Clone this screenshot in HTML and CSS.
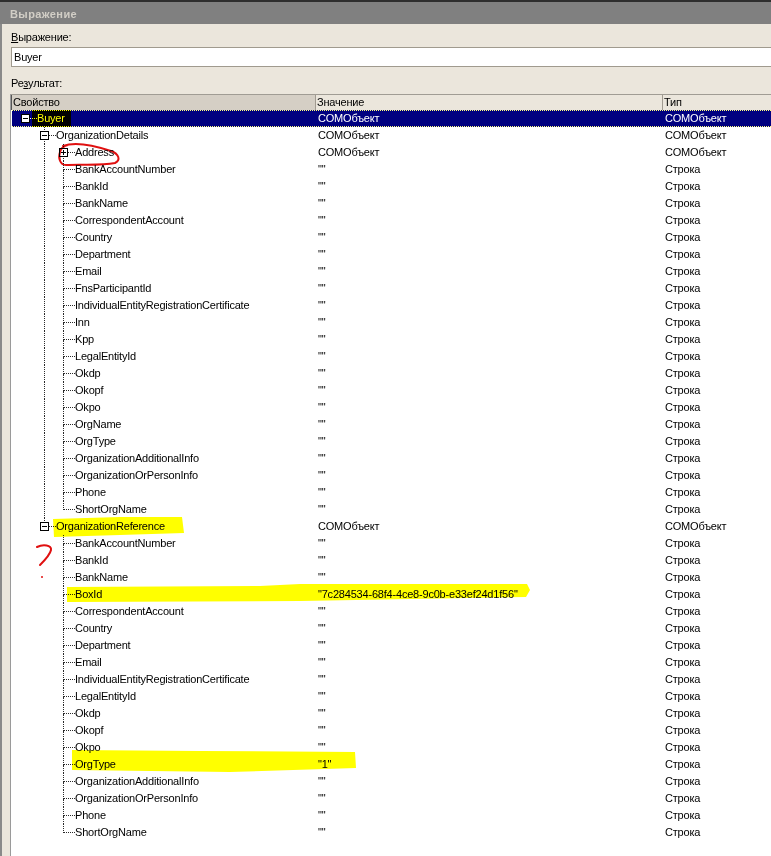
FILE: index.html
```html
<!DOCTYPE html>
<html lang="ru">
<head>
<meta charset="utf-8">
<title>Выражение</title>
<link rel="stylesheet" href="styles.css">
</head>
<body>
<div class="window">
  <div class="titlebar">Выражение</div>
  <div class="content">
    <div class="label"><u>В</u>ыражение:</div>
    <div class="input">Buyer</div>
    <div class="label label2">Ре<u>з</u>ультат:</div>
    <div class="grid">
      <div class="head">
        <div class="h1">Свойство</div>
        <div class="h2">Значение</div>
        <div class="h3">Тип</div>
      </div>
      <div class="body">
        <div class="row sel"><div class="c1"><span class="node root"><i class="up"></i><i class="hz"></i><i class="dn"></i><b class="box"></b></span><span class="lbl">Buyer</span></div><div class="c2">COMОбъект</div><div class="c3">COMОбъект</div></div>

        <div class="row"><div class="c1"><span class="g"></span><span class="node"><i class="up"></i><i class="hz"></i><i class="dn"></i><b class="box"></b></span><span class="lbl">OrganizationDetails</span></div><div class="c2">COMОбъект</div><div class="c3">COMОбъект</div></div>
        <div class="row"><div class="c1"><span class="g"></span><span class="g v"></span><span class="node"><i class="up"></i><i class="hz"></i><i class="dn"></i><b class="box plus"></b></span><span class="lbl">Address</span></div><div class="c2">COMОбъект</div><div class="c3">COMОбъект</div></div>
        <div class="row"><div class="c1"><span class="g"></span><span class="g v"></span><span class="node"><i class="up"></i><i class="hz"></i><i class="dn"></i></span><span class="lbl">BankAccountNumber</span></div><div class="c2">""</div><div class="c3">Строка</div></div>
        <div class="row"><div class="c1"><span class="g"></span><span class="g v"></span><span class="node"><i class="up"></i><i class="hz"></i><i class="dn"></i></span><span class="lbl">BankId</span></div><div class="c2">""</div><div class="c3">Строка</div></div>
        <div class="row"><div class="c1"><span class="g"></span><span class="g v"></span><span class="node"><i class="up"></i><i class="hz"></i><i class="dn"></i></span><span class="lbl">BankName</span></div><div class="c2">""</div><div class="c3">Строка</div></div>
        <div class="row"><div class="c1"><span class="g"></span><span class="g v"></span><span class="node"><i class="up"></i><i class="hz"></i><i class="dn"></i></span><span class="lbl">CorrespondentAccount</span></div><div class="c2">""</div><div class="c3">Строка</div></div>
        <div class="row"><div class="c1"><span class="g"></span><span class="g v"></span><span class="node"><i class="up"></i><i class="hz"></i><i class="dn"></i></span><span class="lbl">Country</span></div><div class="c2">""</div><div class="c3">Строка</div></div>
        <div class="row"><div class="c1"><span class="g"></span><span class="g v"></span><span class="node"><i class="up"></i><i class="hz"></i><i class="dn"></i></span><span class="lbl">Department</span></div><div class="c2">""</div><div class="c3">Строка</div></div>
        <div class="row"><div class="c1"><span class="g"></span><span class="g v"></span><span class="node"><i class="up"></i><i class="hz"></i><i class="dn"></i></span><span class="lbl">Email</span></div><div class="c2">""</div><div class="c3">Строка</div></div>
        <div class="row"><div class="c1"><span class="g"></span><span class="g v"></span><span class="node"><i class="up"></i><i class="hz"></i><i class="dn"></i></span><span class="lbl">FnsParticipantId</span></div><div class="c2">""</div><div class="c3">Строка</div></div>
        <div class="row"><div class="c1"><span class="g"></span><span class="g v"></span><span class="node"><i class="up"></i><i class="hz"></i><i class="dn"></i></span><span class="lbl">IndividualEntityRegistrationCertificate</span></div><div class="c2">""</div><div class="c3">Строка</div></div>
        <div class="row"><div class="c1"><span class="g"></span><span class="g v"></span><span class="node"><i class="up"></i><i class="hz"></i><i class="dn"></i></span><span class="lbl">Inn</span></div><div class="c2">""</div><div class="c3">Строка</div></div>
        <div class="row"><div class="c1"><span class="g"></span><span class="g v"></span><span class="node"><i class="up"></i><i class="hz"></i><i class="dn"></i></span><span class="lbl">Kpp</span></div><div class="c2">""</div><div class="c3">Строка</div></div>
        <div class="row"><div class="c1"><span class="g"></span><span class="g v"></span><span class="node"><i class="up"></i><i class="hz"></i><i class="dn"></i></span><span class="lbl">LegalEntityId</span></div><div class="c2">""</div><div class="c3">Строка</div></div>
        <div class="row"><div class="c1"><span class="g"></span><span class="g v"></span><span class="node"><i class="up"></i><i class="hz"></i><i class="dn"></i></span><span class="lbl">Okdp</span></div><div class="c2">""</div><div class="c3">Строка</div></div>
        <div class="row"><div class="c1"><span class="g"></span><span class="g v"></span><span class="node"><i class="up"></i><i class="hz"></i><i class="dn"></i></span><span class="lbl">Okopf</span></div><div class="c2">""</div><div class="c3">Строка</div></div>
        <div class="row"><div class="c1"><span class="g"></span><span class="g v"></span><span class="node"><i class="up"></i><i class="hz"></i><i class="dn"></i></span><span class="lbl">Okpo</span></div><div class="c2">""</div><div class="c3">Строка</div></div>
        <div class="row"><div class="c1"><span class="g"></span><span class="g v"></span><span class="node"><i class="up"></i><i class="hz"></i><i class="dn"></i></span><span class="lbl">OrgName</span></div><div class="c2">""</div><div class="c3">Строка</div></div>
        <div class="row"><div class="c1"><span class="g"></span><span class="g v"></span><span class="node"><i class="up"></i><i class="hz"></i><i class="dn"></i></span><span class="lbl">OrgType</span></div><div class="c2">""</div><div class="c3">Строка</div></div>
        <div class="row"><div class="c1"><span class="g"></span><span class="g v"></span><span class="node"><i class="up"></i><i class="hz"></i><i class="dn"></i></span><span class="lbl">OrganizationAdditionalInfo</span></div><div class="c2">""</div><div class="c3">Строка</div></div>
        <div class="row"><div class="c1"><span class="g"></span><span class="g v"></span><span class="node"><i class="up"></i><i class="hz"></i><i class="dn"></i></span><span class="lbl">OrganizationOrPersonInfo</span></div><div class="c2">""</div><div class="c3">Строка</div></div>
        <div class="row"><div class="c1"><span class="g"></span><span class="g v"></span><span class="node"><i class="up"></i><i class="hz"></i><i class="dn"></i></span><span class="lbl">Phone</span></div><div class="c2">""</div><div class="c3">Строка</div></div>
        <div class="row"><div class="c1"><span class="g"></span><span class="g v"></span><span class="node last"><i class="up"></i><i class="hz"></i><i class="dn"></i></span><span class="lbl">ShortOrgName</span></div><div class="c2">""</div><div class="c3">Строка</div></div>

        <div class="row"><div class="c1"><span class="g"></span><span class="node last"><i class="up"></i><i class="hz"></i><i class="dn"></i><b class="box"></b></span><span class="lbl">OrganizationReference</span></div><div class="c2">COMОбъект</div><div class="c3">COMОбъект</div></div>
        <div class="row"><div class="c1"><span class="g"></span><span class="g"></span><span class="node"><i class="up"></i><i class="hz"></i><i class="dn"></i></span><span class="lbl">BankAccountNumber</span></div><div class="c2">""</div><div class="c3">Строка</div></div>
        <div class="row"><div class="c1"><span class="g"></span><span class="g"></span><span class="node"><i class="up"></i><i class="hz"></i><i class="dn"></i></span><span class="lbl">BankId</span></div><div class="c2">""</div><div class="c3">Строка</div></div>
        <div class="row"><div class="c1"><span class="g"></span><span class="g"></span><span class="node"><i class="up"></i><i class="hz"></i><i class="dn"></i></span><span class="lbl">BankName</span></div><div class="c2">""</div><div class="c3">Строка</div></div>
        <div class="row"><div class="c1"><span class="g"></span><span class="g"></span><span class="node"><i class="up"></i><i class="hz"></i><i class="dn"></i></span><span class="lbl">BoxId</span></div><div class="c2">"7c284534-68f4-4ce8-9c0b-e33ef24d1f56"</div><div class="c3">Строка</div></div>
        <div class="row"><div class="c1"><span class="g"></span><span class="g"></span><span class="node"><i class="up"></i><i class="hz"></i><i class="dn"></i></span><span class="lbl">CorrespondentAccount</span></div><div class="c2">""</div><div class="c3">Строка</div></div>
        <div class="row"><div class="c1"><span class="g"></span><span class="g"></span><span class="node"><i class="up"></i><i class="hz"></i><i class="dn"></i></span><span class="lbl">Country</span></div><div class="c2">""</div><div class="c3">Строка</div></div>
        <div class="row"><div class="c1"><span class="g"></span><span class="g"></span><span class="node"><i class="up"></i><i class="hz"></i><i class="dn"></i></span><span class="lbl">Department</span></div><div class="c2">""</div><div class="c3">Строка</div></div>
        <div class="row"><div class="c1"><span class="g"></span><span class="g"></span><span class="node"><i class="up"></i><i class="hz"></i><i class="dn"></i></span><span class="lbl">Email</span></div><div class="c2">""</div><div class="c3">Строка</div></div>
        <div class="row"><div class="c1"><span class="g"></span><span class="g"></span><span class="node"><i class="up"></i><i class="hz"></i><i class="dn"></i></span><span class="lbl">IndividualEntityRegistrationCertificate</span></div><div class="c2">""</div><div class="c3">Строка</div></div>
        <div class="row"><div class="c1"><span class="g"></span><span class="g"></span><span class="node"><i class="up"></i><i class="hz"></i><i class="dn"></i></span><span class="lbl">LegalEntityId</span></div><div class="c2">""</div><div class="c3">Строка</div></div>
        <div class="row"><div class="c1"><span class="g"></span><span class="g"></span><span class="node"><i class="up"></i><i class="hz"></i><i class="dn"></i></span><span class="lbl">Okdp</span></div><div class="c2">""</div><div class="c3">Строка</div></div>
        <div class="row"><div class="c1"><span class="g"></span><span class="g"></span><span class="node"><i class="up"></i><i class="hz"></i><i class="dn"></i></span><span class="lbl">Okopf</span></div><div class="c2">""</div><div class="c3">Строка</div></div>
        <div class="row"><div class="c1"><span class="g"></span><span class="g"></span><span class="node"><i class="up"></i><i class="hz"></i><i class="dn"></i></span><span class="lbl">Okpo</span></div><div class="c2">""</div><div class="c3">Строка</div></div>
        <div class="row"><div class="c1"><span class="g"></span><span class="g"></span><span class="node"><i class="up"></i><i class="hz"></i><i class="dn"></i></span><span class="lbl">OrgType</span></div><div class="c2">"1"</div><div class="c3">Строка</div></div>
        <div class="row"><div class="c1"><span class="g"></span><span class="g"></span><span class="node"><i class="up"></i><i class="hz"></i><i class="dn"></i></span><span class="lbl">OrganizationAdditionalInfo</span></div><div class="c2">""</div><div class="c3">Строка</div></div>
        <div class="row"><div class="c1"><span class="g"></span><span class="g"></span><span class="node"><i class="up"></i><i class="hz"></i><i class="dn"></i></span><span class="lbl">OrganizationOrPersonInfo</span></div><div class="c2">""</div><div class="c3">Строка</div></div>
        <div class="row"><div class="c1"><span class="g"></span><span class="g"></span><span class="node"><i class="up"></i><i class="hz"></i><i class="dn"></i></span><span class="lbl">Phone</span></div><div class="c2">""</div><div class="c3">Строка</div></div>
        <div class="row"><div class="c1"><span class="g"></span><span class="g"></span><span class="node last"><i class="up"></i><i class="hz"></i><i class="dn"></i></span><span class="lbl">ShortOrgName</span></div><div class="c2">""</div><div class="c3">Строка</div></div>
      </div>
    </div>
  </div>
</div>
<svg class="marks" width="771" height="856" viewBox="0 0 771 856" aria-hidden="true">
  <g class="hl">
    <rect x="32" y="110" width="39" height="17"/>
    <polygon points="53,519 120,517 182,517 184,533 120,535 54,537"/>
    <polygon points="67,587 260,586 300,584 527,584 530,590 526,597 300,601 67,602"/>
    <polygon points="72,750 200,751 355,752 356,768 230,772 72,770"/>
  </g>
  <g class="pen">
    <path d="M63 146 C76 141, 96 146, 111 151 C119 154, 121 160, 115 163 C100 166, 80 164, 66 165 C60 165, 58 158, 60 152 C61 148, 63 146, 68 145"/>
    <path d="M37 547 C43 544, 52 545, 51 550 C50 555, 45 560, 40 565"/>
    <circle cx="42" cy="577" r="1"/>
  </g>
</svg>
</body>
</html>
```
FILE: styles.css
```css
html, body {
  margin: 0;
  padding: 0;
}
body {
  position: relative;
  width: 771px;
  height: 856px;
  overflow: hidden;
  background: #ebe6dc;
  font-family: "Liberation Sans", Arial, sans-serif;
  font-size: 11px;
  letter-spacing: -0.2px;
  color: #000;
}
.window {
  height: 856px;
  display: flex;
  flex-direction: column;
}
.titlebar {
  border-top: 2px solid #2e2e2e;
  background: #808080;
  height: 19px;
  padding: 3px 0 0 10px;
  line-height: 19px;
  font-weight: bold;
  letter-spacing: 0.4px;
  color: #d2cec6;
}
.content {
  flex: 1;
  display: flex;
  flex-direction: column;
  border-left: 2px solid #8a8a8a;
  padding: 7px 0 0 8px;
  min-height: 0;
}
.label {
  line-height: 13px;
  height: 13px;
  padding-left: 1px;
}
.label u {
  text-decoration: underline;
}
.label2 {
  margin-top: 10px;
}
.input {
  margin: 3px 0 0 1px;
  height: 18px;
  line-height: 18px;
  border: 1px solid #a09a8e;
  border-right: 0;
  background: #fff;
  padding-left: 2px;
}
.grid {
  margin-top: 4px;
  flex: 1;
  display: flex;
  flex-direction: column;
  border-top: 1px solid #a09c94;
  border-left: 1px solid #9a9a9a;
  box-shadow: inset 1px 0 0 #555;
  background: #fff;
  min-height: 0;
}
.head, .row {
  display: grid;
  grid-template-columns: 303px 347px 1fr;
  margin-left: 1px;
}
.head {
  height: 15px;
  line-height: 14px;
  background: #ebe6dc;
}
.h1 {
  background: #d5cfc5;
  padding-left: 1px;
}
.h2, .h3 {
  border-left: 1px solid #a09a90;
  padding-left: 1px;
}
.body {
  flex: 1;
  background: #fff;
}
.row {
  height: 17px;
  line-height: 17px;
  white-space: nowrap;
}
.c1 {
  display: flex;
  padding-left: 5px;
}
.c2, .c3 {
  padding-left: 3px;
}
.g {
  flex: none;
  width: 19px;
  height: 17px;
}
.g.v {
  background: linear-gradient(#2a2a2a 50%, transparent 50%) 8px 0 / 1px 2px repeat-y;
}
.node {
  flex: none;
  display: grid;
  grid-template-columns: 9px 11px;
  grid-template-rows: 9px 8px;
  width: 20px;
  height: 17px;
}
.node i {
  display: block;
}
.node .up {
  grid-area: 1 / 1;
  border-right: 1px dotted #2a2a2a;
}
.node .hz {
  grid-area: 1 / 2;
  border-bottom: 1px dotted #2a2a2a;
}
.node .dn {
  grid-area: 2 / 1;
  border-right: 1px dotted #2a2a2a;
}
.node.root .up,
.node.root .dn,
.node.last .dn {
  border-right-color: transparent;
}
.box {
  grid-area: 1 / 1 / 3 / 3;
  align-self: start;
  justify-self: start;
  margin: 4px 0 0 4px;
  box-sizing: border-box;
  width: 9px;
  height: 9px;
  border: 1px solid #000;
  background: linear-gradient(#000, #000) center / 5px 1px no-repeat, #fff;
}
.box.plus {
  background:
    linear-gradient(#000, #000) center / 5px 1px no-repeat,
    linear-gradient(#000, #000) center / 1px 5px no-repeat,
    #fff;
}
.lbl {
  white-space: nowrap;
}
.row.sel {
  color: #fff;
  background:
    repeating-linear-gradient(90deg, #ffff80 0 1px, transparent 1px 2px) 0 0 / 100% 1px no-repeat,
    repeating-linear-gradient(90deg, #ffff80 0 1px, transparent 1px 2px) 0 100% / 100% 1px no-repeat,
    #000080;
}
.row.sel .hz {
  border-bottom-color: #fff;
}
.marks {
  position: absolute;
  top: 0;
  left: 0;
  mix-blend-mode: multiply;
  pointer-events: none;
}
.hl {
  fill: #ffff00;
}
.pen {
  fill: none;
  stroke: #e01010;
  stroke-width: 2;
  stroke-linecap: round;
}
.pen circle {
  fill: #e01010;
  stroke: none;
}
```
